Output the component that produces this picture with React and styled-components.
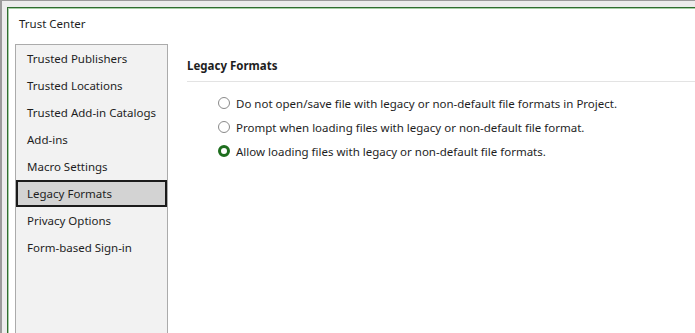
import styled, { createGlobalStyle } from 'styled-components'

const GlobalStyle = createGlobalStyle`
  html, body {
    margin: 0;
    padding: 0;
    height: 100%;
    overflow: hidden;
  }
  #root {
    height: 100%;
  }
`

const Backdrop = styled.div`
  height: 100%;
  box-sizing: border-box;
  padding: 6px 0 0 5px;
  background: #ececec;
  border-top: 1px solid #9a9a9a;
  border-left: 2px solid #9a9a9a;
  font-family: 'Noto Sans', 'Open Sans', sans-serif;
  font-size: 11.5px;
  color: #1e1e1e;
`

const Dialog = styled.div`
  height: 100%;
  box-sizing: border-box;
  display: flex;
  flex-direction: column;
  background: #fff;
  border-top: 1px solid #2f6d2f;
  border-left: 1px solid #2f6d2f;
  box-shadow: inset 1px 1px 0 #a8cfa8;
`

const TitleBar = styled.div`
  height: 36px;
  flex: none;
  display: flex;
  align-items: center;
  padding: 0 0 6px 11px;
  box-sizing: border-box;
`

const Body = styled.div`
  flex: 1;
  display: flex;
  min-height: 0;
`

const Sidebar = styled.ul`
  list-style: none;
  margin: 0 0 0 7px;
  padding: 0;
  width: 151px;
  flex: none;
  background: #f2f2f2;
  border: 1px solid #ababab;
  border-bottom: none;
`

const NavItem = styled.li`
  height: 27px;
  box-sizing: border-box;
  display: flex;
  align-items: center;
  padding-left: ${({ $active }) => ($active ? '9px' : '11px')};
  border: ${({ $active }) => ($active ? '2px solid #1b1b1b' : 'none')};
  background: ${({ $active }) => ($active ? '#d3d3d3' : 'transparent')};
  white-space: nowrap;
`

const Main = styled.section`
  flex: 1;
  padding: 14px 0 0 19px;
`

const Heading = styled.h2`
  margin: 0;
  line-height: 16px;
  padding-bottom: 7px;
  font-size: 11.5px;
  font-weight: 700;
  color: #1e1e1e;
  border-bottom: 1px solid #e3e3e3;
`

const Options = styled.div`
  display: flex;
  flex-direction: column;
  padding: 9px 0 0 31px;
`

const Option = styled.label`
  height: 24px;
  display: flex;
  align-items: center;
  gap: 6px;
  white-space: nowrap;
`

const Radio = styled.span`
  width: 12px;
  height: 12px;
  box-sizing: border-box;
  border-radius: 50%;
  flex: none;
  background: #fff;
  border: ${({ $checked }) => ($checked ? '3px solid #1e6e1e' : '1px solid #8a8a8a')};
`

const pages = [
  'Trusted Publishers',
  'Trusted Locations',
  'Trusted Add-in Catalogs',
  'Add-ins',
  'Macro Settings',
  'Legacy Formats',
  'Privacy Options',
  'Form-based Sign-in',
]

const options = [
  'Do not open/save file with legacy or non-default file formats in Project.',
  'Prompt when loading files with legacy or non-default file format.',
  'Allow loading files with legacy or non-default file formats.',
]

export default function App() {
  return (
    <>
      <GlobalStyle />
      <Backdrop>
        <Dialog>
          <TitleBar>Trust Center</TitleBar>
          <Body>
            <Sidebar>
              {pages.map((p) => (
                <NavItem key={p} $active={p === 'Legacy Formats'}>
                  {p}
                </NavItem>
              ))}
            </Sidebar>
            <Main>
              <Heading>Legacy Formats</Heading>
              <Options>
                {options.map((o, i) => (
                  <Option key={o}>
                    <Radio $checked={i === 2} />
                    {o}
                  </Option>
                ))}
              </Options>
            </Main>
          </Body>
        </Dialog>
      </Backdrop>
    </>
  )
}
